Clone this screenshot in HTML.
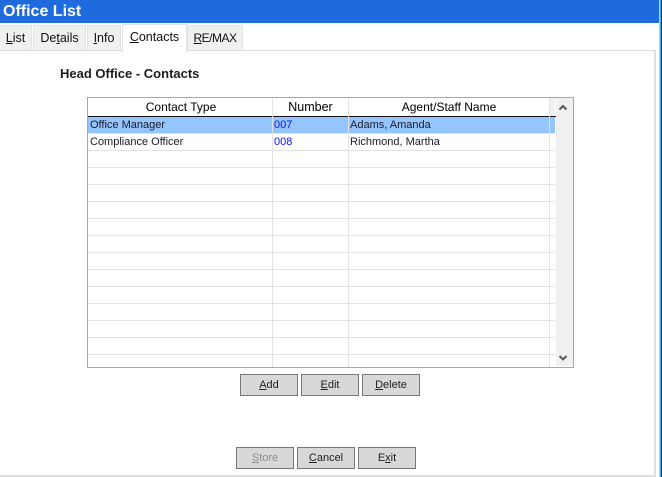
<!DOCTYPE html>
<html>
<head>
<meta charset="utf-8">
<style>
html,body{margin:0;padding:0;width:662px;height:477px;overflow:hidden;background:#fff;font-family:"Liberation Sans",sans-serif;color:#111;}
.a{position:absolute;}
.t{position:absolute;white-space:nowrap;}
.tab{position:absolute;top:25px;height:25px;background:#f0f0f0;border:1px solid #e3e3e3;border-bottom:none;box-sizing:border-box;font-size:12.5px;line-height:25px;text-align:center;}
.h{position:absolute;top:98px;height:18px;font-size:12px;line-height:18px;text-align:center;color:#000;}
.c{position:absolute;font-size:11px;line-height:14px;white-space:nowrap;color:#1a1a2a;}
.btn{position:absolute;width:58px;height:22px;box-sizing:border-box;background:#d8d8d8;border:1px solid #777;font-size:11px;line-height:21px;text-align:center;color:#222;}
.rl{position:absolute;left:88px;width:467px;height:1px;background:#e3e3e3;}
.vl{position:absolute;top:98px;width:1px;height:269px;background:#e3e3e3;}
u{text-decoration:underline;}
</style>
</head>
<body>
<div class="a" style="left:0;top:0;width:659px;height:23px;background:#1f6bdd;"></div>
<div class="t" style="left:3px;top:2px;font-size:16px;line-height:20px;font-weight:bold;color:#fff;">Office List</div>
<div class="a" style="left:659px;top:0;width:1px;height:477px;background:#b8d4e4;"></div>
<div class="a" style="left:660px;top:0;width:1px;height:477px;background:#1fb2f0;"></div>
<div class="a" style="left:661px;top:0;width:1px;height:477px;background:#222;"></div>

<div class="a" style="left:0;top:50px;width:655px;height:1px;background:#dcdcdc;"></div>
<div class="a" style="left:654px;top:50px;width:2px;height:426px;background:#dedede;"></div>
<div class="a" style="left:0;top:475px;width:656px;height:2px;background:#dedede;"></div>

<div class="tab" style="left:-1px;width:33px;"><u>L</u>ist</div>
<div class="tab" style="left:33px;width:53px;">De<u>t</u>ails</div>
<div class="tab" style="left:87px;width:34px;"><u>I</u>nfo</div>
<div class="tab" style="left:122px;top:24px;width:65px;height:28px;background:#fff;line-height:24px;"><u>C</u>ontacts</div>
<div class="tab" style="left:187px;width:56px;font-size:12px;letter-spacing:-.5px;"><u>R</u>E/MAX</div>

<div class="t" style="left:60px;top:66px;font-size:13px;line-height:15px;font-weight:bold;color:#1c1c1c;">Head Office - Contacts</div>

<!-- grid -->
<div class="a" style="left:87px;top:97px;width:487px;height:271px;box-sizing:border-box;border:1px solid #a8a8a8;background:#fff;"></div>
<div class="a" style="left:88px;top:117px;width:467px;height:16px;background:#94c5fc;"></div>
<div class="a" style="left:549px;top:98px;width:6px;height:18px;background:#f0f0f0;"></div>
<div class="a" style="left:556px;top:98px;width:17px;height:268px;background:#f0f0f0;"></div>
<div class="a" style="left:88px;top:116px;width:468px;height:1px;background:#111;"></div>

<div class="rl" style="top:133px;"></div>
<div class="rl" style="top:150px;"></div>
<div class="rl" style="top:167px;"></div>
<div class="rl" style="top:184px;"></div>
<div class="rl" style="top:201px;"></div>
<div class="rl" style="top:218px;"></div>
<div class="rl" style="top:235px;"></div>
<div class="rl" style="top:252px;"></div>
<div class="rl" style="top:269px;"></div>
<div class="rl" style="top:286px;"></div>
<div class="rl" style="top:303px;"></div>
<div class="rl" style="top:320px;"></div>
<div class="rl" style="top:337px;"></div>
<div class="rl" style="top:354px;"></div>

<div class="vl" style="left:272px;"></div>
<div class="vl" style="left:348px;"></div>
<div class="vl" style="left:549px;"></div>

<div class="h" style="left:88px;width:186px;">Contact Type</div>
<div class="h" style="left:273px;width:75px;font-size:12.5px;">Number</div>
<div class="h" style="left:349px;width:200px;">Agent/Staff Name</div>

<div class="c" style="left:90px;top:118px;">Office Manager</div>
<div class="c" style="left:274px;top:118px;color:#1010f0;">007</div>
<div class="c" style="left:350px;top:118px;">Adams, Amanda</div>
<div class="c" style="left:90px;top:135px;">Compliance Officer</div>
<div class="c" style="left:274px;top:135px;color:#1010f0;">008</div>
<div class="c" style="left:350px;top:135px;">Richmond, Martha</div>

<svg class="a" style="left:556px;top:98px;" width="17" height="268" viewBox="0 0 17 268">
<path d="M3.5 11.5 L7 8 L10.5 11.5" fill="none" stroke="#5a5a5a" stroke-width="2"/>
<path d="M3.5 258 L7 261.5 L10.5 258" fill="none" stroke="#5a5a5a" stroke-width="2"/>
</svg>

<div class="btn" style="left:240px;top:374px;"><u>A</u>dd</div>
<div class="btn" style="left:301px;top:374px;"><u>E</u>dit</div>
<div class="btn" style="left:362px;top:374px;"><u>D</u>elete</div>
<div class="btn" style="left:236px;top:447px;color:#8c8c8c;"><u>S</u>tore</div>
<div class="btn" style="left:297px;top:447px;"><u>C</u>ancel</div>
<div class="btn" style="left:358px;top:447px;">E<u>x</u>it</div>
</body>
</html>
